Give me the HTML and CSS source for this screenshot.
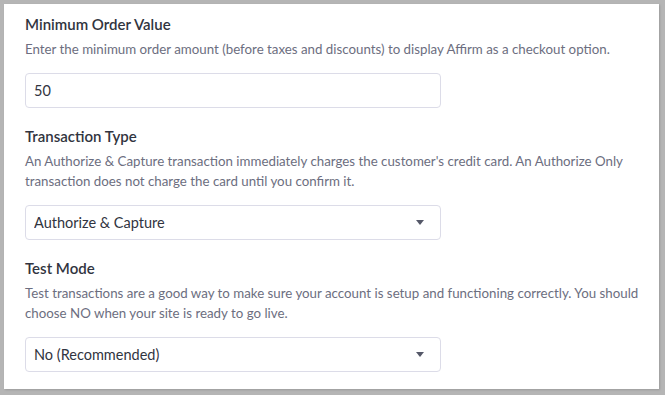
FILE: index.html
```html
<!DOCTYPE html>
<html lang="en">
<head>
  <meta charset="UTF-8">
  <title>Affirm Settings</title>
  <link rel="stylesheet" href="styles.css">
</head>
<body>
<div class="panel">
  <div class="field">
    <label class="field-label" for="minOrder">Minimum Order Value</label>
    <p class="field-help">Enter the minimum order amount (before taxes and discounts) to display Affirm as a checkout option.</p>
    <input class="control" type="text" id="minOrder" value="50">
  </div>

  <div class="field">
    <label class="field-label" for="txType">Transaction Type</label>
    <p class="field-help">An Authorize &amp; Capture transaction immediately charges the customer's credit card. An Authorize Only transaction does not charge the card until you confirm it.</p>
    <div class="select-wrap">
      <select class="control" id="txType">
        <option>Authorize &amp; Capture</option>
        <option>Authorize Only</option>
      </select>
      <span class="caret"></span>
    </div>
  </div>

  <div class="field">
    <label class="field-label" for="testMode">Test Mode</label>
    <p class="field-help">Test transactions are a good way to make sure your account is setup and functioning correctly. You should choose NO when your site is ready to go live.</p>
    <div class="select-wrap">
      <select class="control" id="testMode">
        <option>No (Recommended)</option>
        <option>Yes</option>
      </select>
      <span class="caret"></span>
    </div>
  </div>
</div>
</body>
</html>
```

FILE: styles.css
```css
html, body {
  margin: 0;
  height: 100%;
}

body {
  background-color: #b5b5b5;
  padding: 4px 6px 6px 4px;
  box-sizing: border-box;
  font-family: Lato, "Noto Sans", sans-serif;
  color: #313440;
}

.panel {
  background-color: white;
  height: 100%;
  box-sizing: border-box;
  padding: 9px 18px 0 21px;
  box-shadow: 1px 1px 2px rgba(0,0,0,0.15);
}

.field {
  margin-bottom: 17px;
}

.field-label {
  display: block;
  font-size: 15px;
  font-weight: 600;
  line-height: 22px;
  color: #313440;
}

.field-help {
  margin: 4px 0 14px;
  font-size: 13.3px;
  line-height: 20px;
  color: #6c6e80;
}

.control {
  display: block;
  width: 416px;
  height: 35px;
  box-sizing: border-box;
  padding: 0 8px;
  border: 1px solid #dcdce8;
  border-radius: 4px;
  background-color: white;
  font-family: inherit;
  font-size: 14.5px;
  color: #313440;
  appearance: none;
  outline: none;
}

.select-wrap {
  position: relative;
  width: 416px;
}

.caret {
  position: absolute;
  right: 17px;
  top: 15px;
  border-left: 4px solid transparent;
  border-right: 4px solid transparent;
  border-top: 5px solid #555868;
  pointer-events: none;
}
```
